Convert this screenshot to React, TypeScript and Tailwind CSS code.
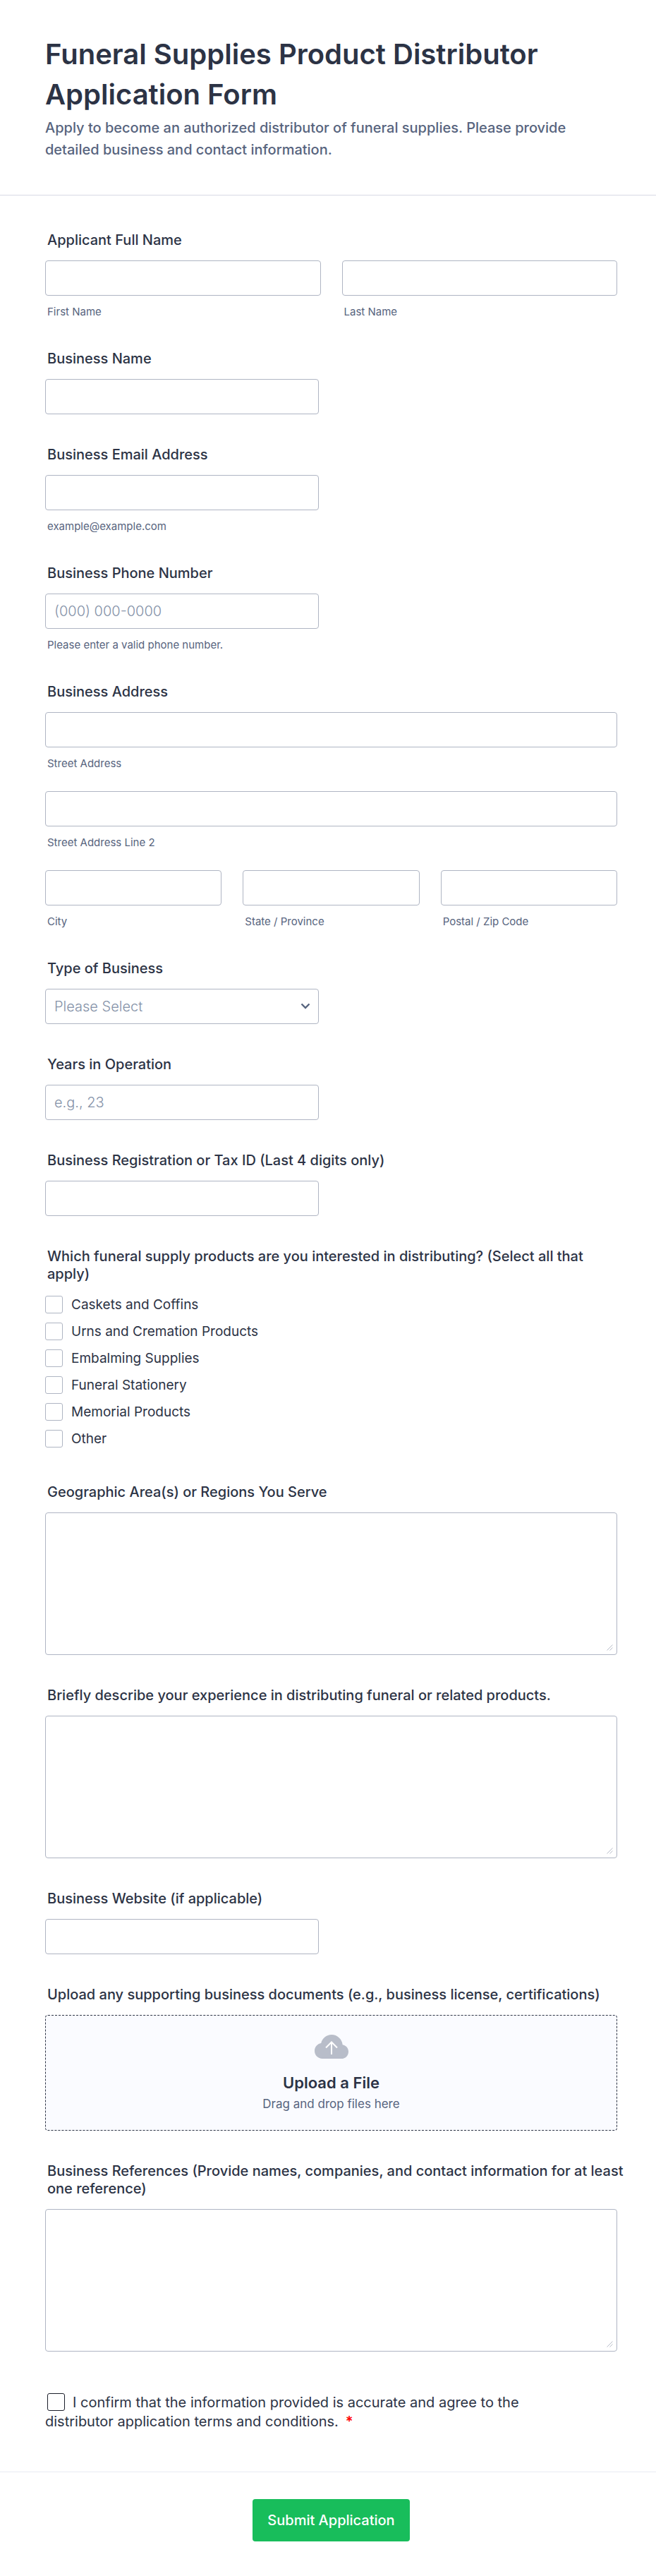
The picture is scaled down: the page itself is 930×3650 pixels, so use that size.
import { useState } from "react"
import type { InputHTMLAttributes, ReactNode } from "react"

const products = [
  "Caskets and Coffins",
  "Urns and Cremation Products",
  "Embalming Supplies",
  "Funeral Stationery",
  "Memorial Products",
  "Other",
]

const businessTypes = ["Funeral Home", "Wholesaler", "Retailer", "Manufacturer"]

const labelClass = "block pt-px pl-[3px] -mr-4 text-[20px] leading-[25px] font-medium text-[#2c3345]"
const boxClass = "block border border-[#afb5c3] rounded bg-white text-[20px] text-[#2c3345] placeholder:font-light placeholder:text-[#8592a8] outline-none focus:border-[#2e69ff]"

interface FieldProps {
  label: string
  htmlFor: string
  children: ReactNode
}

function Field({ label, htmlFor, children }: FieldProps) {
  return (
    <div>
      <label htmlFor={htmlFor} className={labelClass}>{label}</label>
      <div className="mt-4">{children}</div>
    </div>
  )
}

function Group({ label, children }: { label: string; children: ReactNode }) {
  return (
    <fieldset className="min-w-0">
      <legend className={labelClass}>{label}</legend>
      <div className="mt-4">{children}</div>
    </fieldset>
  )
}

interface TextInputProps extends InputHTMLAttributes<HTMLInputElement> {
  id: string
  half?: boolean
}

function TextInput({ half, ...props }: TextInputProps) {
  return (
    <input
      type="text"
      {...props}
      className={`${boxClass} h-[50px] px-3 ${half ? "w-full max-w-[388px]" : "w-full"}`}
    />
  )
}

function SubLabel({ htmlFor, children }: { htmlFor: string; children: ReactNode }) {
  return (
    <label htmlFor={htmlFor} className="block mt-[14px] pl-[3px] text-[15px] leading-[18px] text-[#57647e]">
      {children}
    </label>
  )
}

function SubField({ id, label }: { id: string; label: string }) {
  return (
    <div className="min-w-0">
      <TextInput id={id} />
      <SubLabel htmlFor={id}>{label}</SubLabel>
    </div>
  )
}

function LongText({ id }: { id: string }) {
  return (
    <div className="relative">
      <textarea id={id} className={`${boxClass} h-[202px] w-full resize-none p-3`} />
      <svg
        className="pointer-events-none absolute right-1.5 bottom-1.5"
        width="9"
        height="9"
        viewBox="0 0 9 9"
        aria-hidden="true"
      >
        <path d="M0.500 8.500L8.500 0.500M4.500 8.500L8.500 4.500" stroke="#b8bdc9" />
      </svg>
    </div>
  )
}

function CloudIcon() {
  return (
    <svg width="48" height="34" viewBox="0 0 48 34" fill="none" aria-hidden="true">
      <path
        d="M11 34C4.900 34 0 29.200 0 23.100C0 17.400 3.900 12.900 9.200 12C10.800 5 16.700 0 24 0C32.300 0 38.900 6.300 39.700 14.200C44.500 15 48 19 48 23.900C48 29.500 43.600 34 38 34Z"
        fill="#b8bdc9"
      />
      <path d="M24 28V11M16 18.500L24 10.500L32 18.500" stroke="#fff" strokeWidth="2" />
    </svg>
  )
}

export default function App() {
  const [selected, setSelected] = useState<string[]>([])

  const toggle = (product: string) => {
    setSelected((prev) =>
      prev.includes(product) ? prev.filter((p) => p !== product) : [...prev, product]
    )
  }

  return (
    <form
      className="bg-white font-['Inter',sans-serif] text-[#2c3345]"
      onSubmit={(e) => e.preventDefault()}
    >
      <header className="px-16 py-12 border-b border-[#d7dae5]">
        <h1 className="text-[40px] leading-[57px] font-semibold">
          Funeral Supplies Product Distributor Application Form
        </h1>
        <p className="mt-1 max-w-[780px] text-[20px] leading-[31px] font-medium text-[#57647e]">
          Apply to become an authorized distributor of funeral supplies. Please provide detailed
          business and contact information.
        </p>
      </header>

      <div className="flex flex-col gap-11 pl-16 pr-[55px] pt-[50px]">
        <Group label="Applicant Full Name">
          <div className="grid grid-cols-2 gap-[30px]">
            <SubField id="first-name" label="First Name" />
            <SubField id="last-name" label="Last Name" />
          </div>
        </Group>

        <Field label="Business Name" htmlFor="business-name">
          <TextInput id="business-name" half />
        </Field>

        <Field label="Business Email Address" htmlFor="email">
          <TextInput id="email" type="email" half />
          <SubLabel htmlFor="email">example@example.com</SubLabel>
        </Field>

        <Field label="Business Phone Number" htmlFor="phone">
          <TextInput id="phone" type="tel" placeholder="(000) 000-0000" half />
          <SubLabel htmlFor="phone">Please enter a valid phone number.</SubLabel>
        </Field>

        <Group label="Business Address">
          <div className="flex flex-col gap-[30px]">
            <SubField id="street" label="Street Address" />
            <SubField id="street-2" label="Street Address Line 2" />
            <div className="grid grid-cols-3 gap-[30px]">
              <SubField id="city" label="City" />
              <SubField id="state" label="State / Province" />
              <SubField id="zip" label="Postal / Zip Code" />
            </div>
          </div>
        </Group>

        <Field label="Type of Business" htmlFor="business-type">
          <div className="relative max-w-[388px]">
            <select
              id="business-type"
              defaultValue=""
              className="block h-[50px] w-full appearance-none rounded border border-[#afb5c3] bg-white px-3 text-[20px] font-light text-[#8592a8] outline-none"
            >
              <option value="">Please Select</option>
              {businessTypes.map((type) => (
                <option key={type} value={type}>{type}</option>
              ))}
            </select>
            <svg
              className="pointer-events-none absolute right-3 top-5"
              width="14"
              height="9"
              viewBox="0 0 14 9"
              fill="none"
              aria-hidden="true"
            >
              <path d="M1.500 1.500L7 7L12.500 1.500" stroke="#57647e" strokeWidth="2.400" />
            </svg>
          </div>
        </Field>

        <Field label="Years in Operation" htmlFor="years">
          <TextInput id="years" placeholder="e.g., 23" half />
        </Field>

        <Field label="Business Registration or Tax ID (Last 4 digits only)" htmlFor="tax-id">
          <TextInput id="tax-id" maxLength={4} half />
        </Field>

        <Group label="Which funeral supply products are you interested in distributing? (Select all that apply)">
          <div className="flex flex-col gap-[13px] pt-0.5 pb-1.5">
            {products.map((product) => (
              <label key={product} className="flex items-center gap-3 text-[19px] leading-[25px]">
                <input
                  type="checkbox"
                  checked={selected.includes(product)}
                  onChange={() => toggle(product)}
                  className="size-[25px] shrink-0 appearance-none rounded-[3px] border border-[#afb5c3] bg-white checked:bg-[#2e69ff]"
                />
                {product}
              </label>
            ))}
          </div>
        </Group>

        <Field label="Geographic Area(s) or Regions You Serve" htmlFor="regions">
          <LongText id="regions" />
        </Field>

        <Field
          label="Briefly describe your experience in distributing funeral or related products."
          htmlFor="experience"
        >
          <LongText id="experience" />
        </Field>

        <Field label="Business Website (if applicable)" htmlFor="website">
          <TextInput id="website" type="url" half />
        </Field>

        <Field
          label="Upload any supporting business documents (e.g., business license, certifications)"
          htmlFor="documents"
        >
          <label
            htmlFor="documents"
            className="relative flex h-[164px] cursor-pointer flex-col items-center rounded border border-dashed border-[#2c3345] bg-[#fafbff] pt-[27px]"
          >
            <input id="documents" type="file" multiple className="sr-only" />
            <CloudIcon />
            <span className="mt-5 text-[22px] leading-7 font-semibold">Upload a File</span>
            <span className="mt-1 text-[17px] leading-6 text-[#57647e]">Drag and drop files here</span>
          </label>
        </Field>

        <Field
          label="Business References (Provide names, companies, and contact information for at least one reference)"
          htmlFor="references"
        >
          <LongText id="references" />
        </Field>

        <div className="max-w-[760px] pt-[15px] text-[20px] leading-[27px]">
          <input
            id="confirm"
            type="checkbox"
            required
            className="ml-[3px] mr-[11px] size-[25px] appearance-none rounded-[3px] border border-[#1b1f2b] bg-white align-top checked:bg-[#2e69ff]"
          />
          <label htmlFor="confirm">
            <span>I confirm that the information provided is accurate and agree to the </span>
            <span>distributor application terms and conditions.</span>
            <span className="ml-2.5 font-semibold text-[#ff0000]">*</span>
          </label>
        </div>
      </div>

      <footer className="mt-[57px] flex justify-center border-t border-[#e9eaf2] pt-[38px] pr-[55px] pb-[49px] pl-16">
        <button
          type="submit"
          className="h-[60px] rounded bg-[#18bd5b] px-[21px] text-[20px] font-medium text-white"
        >
          Submit Application
        </button>
      </footer>
    </form>
  )
}
